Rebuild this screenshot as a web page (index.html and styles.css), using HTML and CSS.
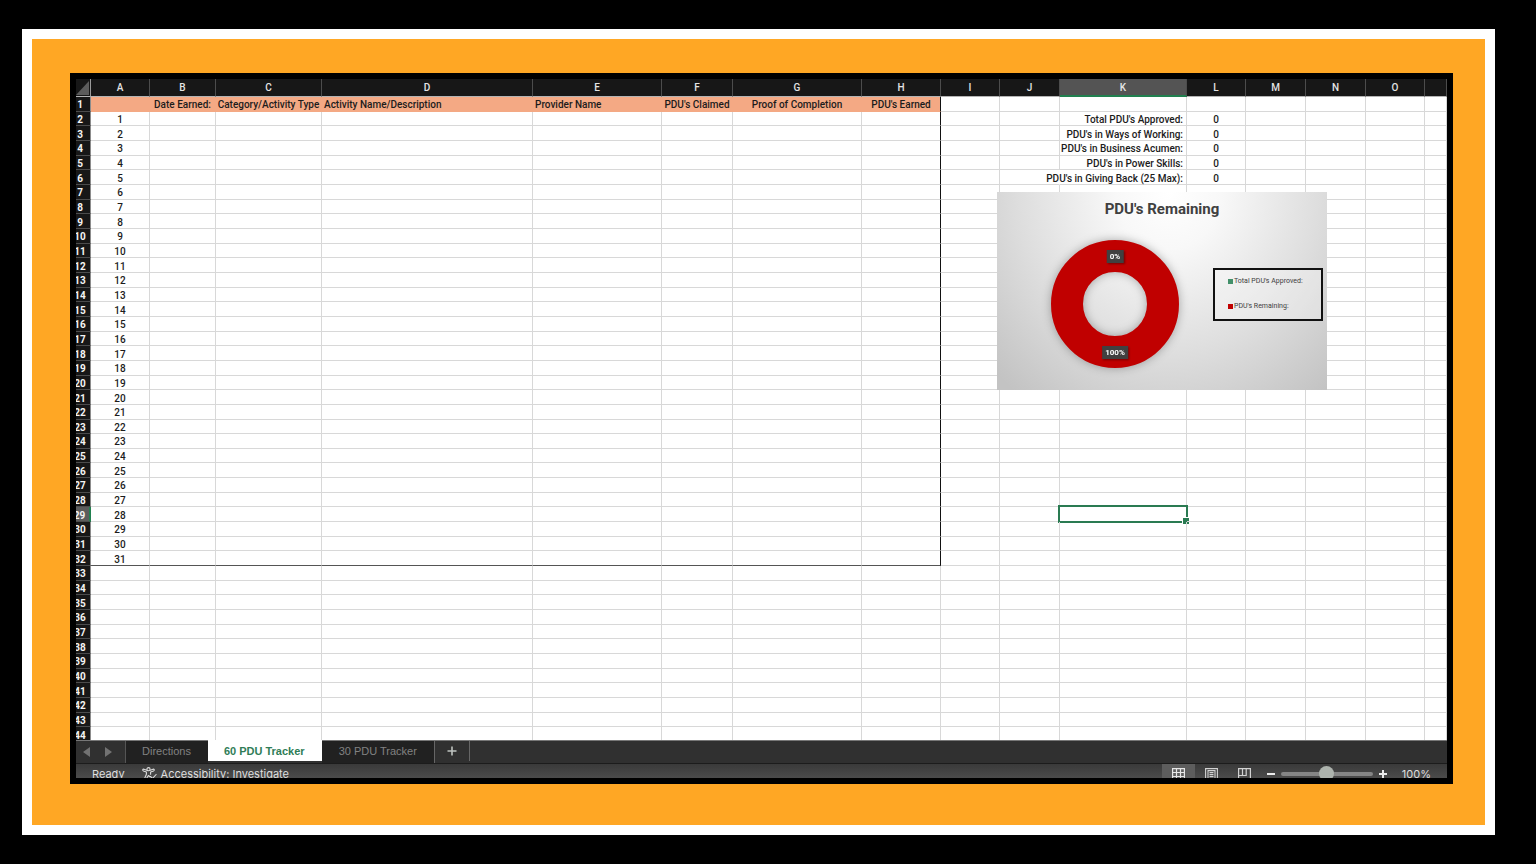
FILE: index.html
```html
<!DOCTYPE html>
<html lang="en">
<head>
<meta charset="utf-8">
<title>60 PDU Tracker</title>
<link rel="stylesheet" href="styles.css">
</head>
<body>
<div class="frame">
  <div class="mat">
    <main class="window">
      <div class="sheet-area">
        <table class="sheet">
          <thead>
            <tr id="columns"><th class="corner" aria-label="Select all"><svg viewBox="0 0 14 17" width="14" height="17" aria-hidden="true"><path d="M13 2v14H0z" fill="#5c5c5c"/></svg></th></tr>
          </thead>
          <tbody id="rows"></tbody>
        </table>
      </div>

      <nav class="tabs" aria-label="Sheets">
        <button class="arrow" type="button" aria-label="Previous sheet"><svg width="8" height="10" viewBox="0 0 8 10"><path d="M7 0v10L0 5z" fill="#727272"/></svg></button>
        <button class="arrow" type="button" aria-label="Next sheet"><svg width="8" height="10" viewBox="0 0 8 10"><path d="M1 0v10l7-5z" fill="#727272"/></svg></button>
        <button class="tab tab-first" type="button">Directions</button>
        <button class="tab tab-active" type="button">60 PDU Tracker</button>
        <button class="tab tab-last" type="button">30 PDU Tracker</button>
        <button class="add" type="button" aria-label="Add sheet"><svg width="10" height="10" viewBox="0 0 10 10"><path d="M5 0.5v9M0.5 5h9" stroke="#bdc2bf" stroke-width="1.6"/></svg></button>
      </nav>

      <footer class="status">
        <span class="ready">Ready</span>
        <button class="access" type="button">
          <svg width="15" height="14" viewBox="0 0 15 14" fill="none" stroke="#dcdcdc" stroke-width="1.1" stroke-linecap="round" stroke-linejoin="round"><circle cx="6.5" cy="2.2" r="1.6"/><path d="M4.8 3.2 2 2.2c-1.3-.3-1.7 1.2-.6 1.7L4.4 5v2.2L2.8 11c-.4 1.2 1 1.8 1.6.7L6.4 8.500 8 9.700M8.200 3.200 11 2.200c1.300-.3 1.700 1.200.6 1.700L8.600 5v2.200M8.500 9.500l2 2 3.600-4"/></svg>
          Accessibility: Investigate
        </button>
        <div class="controls">
          <button class="view view-on" type="button" aria-label="Normal view"><svg width="13" height="13" viewBox="0 0 13 13" fill="none" stroke="#e6e6e6" stroke-width="1.2"><path d="M.6.6h11.800v11.800H.6zM4.500.6v11.800M8.500.6v11.800M.6 4.500h11.800M.6 8.500h11.800"/></svg></button>
          <button class="view" type="button" aria-label="Page layout"><svg width="13" height="13" viewBox="0 0 13 13" fill="none" stroke="#d2d2d2" stroke-width="1.100"><path d="M.6.6h11.800v11.800H.6zM3 2.600h7v8H3zM4.500 4.600h4M4.500 6.600h4M4.500 8.600h4"/></svg></button>
          <button class="view" type="button" aria-label="Page break preview"><svg width="13" height="13" viewBox="0 0 13 13" fill="none" stroke="#d2d2d2" stroke-width="1.200"><path d="M.6 12.400V.6h11.800v11.800M.6 7.500h7.600V.6M4.500.6v6.900"/></svg></button>
          <button class="step step-out" type="button" aria-label="Zoom out"><svg width="8" height="8" viewBox="0 0 8 8"><path d="M0 4h8" stroke="#ececec" stroke-width="2"/></svg></button>
          <input class="zoom" type="range" min="0" max="100" value="50" aria-label="Zoom">
          <button class="step" type="button" aria-label="Zoom in"><svg width="8" height="8" viewBox="0 0 8 8"><path d="M0 4h8M4 0v8" stroke="#ececec" stroke-width="2"/></svg></button>
          <span class="percent">100%</span>
        </div>
      </footer>
    </main>
  </div>
</div>

<template id="chart">
  <figure class="chart">
    <figcaption class="chart-title">PDU's Remaining</figcaption>
    <div class="chart-body">
      <div class="donut">
        <svg width="128" height="128" viewBox="0 0 128 128" aria-hidden="true"><circle cx="64" cy="64" r="48" fill="none" stroke="#c00000" stroke-width="32"/></svg>
        <span class="value value-top">0%</span>
        <span class="value value-bottom">100%</span>
      </div>
      <ul class="legend">
        <li class="approved">Total PDU's Approved:</li>
        <li class="remaining">PDU's Remaining:</li>
      </ul>
    </div>
  </figure>
</template>
<script src="app.js"></script>
</body>
</html>
```

FILE: styles.css
```css
* {
  box-sizing: border-box;
}

body {
  margin: 0;
  height: 100vh;
  padding: 29px 41px 29px 22px;
  background: #000;
  font-family: Roboto, "Noto Sans", sans-serif;
  font-size: 10px;
  color: #1c1c1c;
}

button {
  margin: 0;
  padding: 0;
  border: 0;
  background: none;
  color: inherit;
  font: inherit;
}

svg {
  display: block;
}

.frame {
  height: 100%;
  padding: 10px;
  background: #fff;
}

.mat {
  height: 100%;
  padding: 34px 32px 41px 38px;
  background: #ffa724;
}

.window {
  display: flex;
  flex-direction: column;
  height: 100%;
  border: 6px solid #000;
  background: #fff;
  overflow: hidden;
}

/* Worksheet */

.sheet-area {
  flex: 1;
  min-height: 0;
  overflow: hidden;
}

.sheet {
  display: grid;
  grid-template-columns: 15fr 59fr 66fr 106fr 211fr 129fr 71fr 129fr 79fr 59fr 60fr 127fr 59fr 60fr 60fr 59fr 22fr;
  grid-template-rows: 18px repeat(44, minmax(0, 1fr));
  height: calc(100% + 2px);
}

.sheet thead,
.sheet tbody,
.sheet tr {
  display: contents;
}

.sheet th,
.sheet td {
  display: flex;
  align-items: center;
  justify-content: center;
  min-width: 0;
  padding: 0;
  line-height: 12px;
  white-space: nowrap;
  font-weight: 500;
}

.sheet td {
  position: relative;
  padding-top: 3px;
  border-right: 1px solid #d8d8d8;
  border-bottom: 1px solid #d8d8d8;
}

.sheet thead th {
  border-right: 1px solid #4c4c4c;
  border-bottom: 1px solid #b4b4b4;
  background: #171717;
  color: #e4e4e4;
}

.sheet thead .corner {
  border-right-color: #9a9a9a;
}

.sheet thead .picked {
  padding-top: 1px;
  border-bottom: 2px solid #21804f;
  background: #545454;
}

.sheet tbody th {
  padding: 3px 6px 0 0;
  border-right: 1px solid #8c8c8c;
  border-bottom: 1px solid #4c4c4c;
  background: #171717;
  color: #f4f4f4;
  font-weight: 700;
  overflow: hidden;
}

.sheet tbody .picked {
  border-right: 2px solid #21804f;
  background: #5c5c5c;
}

.sheet .heading {
  border-color: #f4a984;
  background: #f4a984;
}

.sheet .left {
  justify-content: flex-start;
  padding-left: 2px;
}

.sheet .right {
  justify-content: flex-end;
  padding-right: 3px;
}

.sheet .log-edge {
  border-right-color: #111;
}

.sheet .log-end {
  border-bottom-color: #555;
}

.sheet .open {
  border-right-color: transparent;
}

.selected::before {
  content: "";
  position: absolute;
  inset: -2px;
  border: 2px solid #2a7b52;
}

.selected::after {
  content: "";
  position: absolute;
  right: -3px;
  bottom: -3px;
  width: 6px;
  height: 6px;
  border-top: 1px solid #fff;
  border-left: 1px solid #fff;
  background: #2a7b52 padding-box;
}

/* Chart */

.chart {
  position: absolute;
  z-index: 1;
  top: 7px;
  left: -3px;
  width: 330px;
  height: 198px;
  margin: 0;
  background: radial-gradient(ellipse 240px 260px at 52% 0, #fff 0, #f8f8f8 22%, #dedede 62%, #c3c3c3 100%);
  color: #404040;
}

.chart-title {
  padding-top: 7px;
  font-size: 15px;
  font-weight: 700;
  line-height: 20px;
  text-align: center;
}

.chart-body {
  display: flex;
  align-items: center;
  margin-top: 21px;
  padding-left: 54px;
}

.donut {
  position: relative;
  border-radius: 50%;
  filter: drop-shadow(0 0 5px rgba(0, 0, 0, 0.3));
}

.value {
  position: absolute;
  left: 50%;
  padding: 0 3px;
  transform: translateX(-50%);
  background: #404040;
  box-shadow: 1px 1px 2px rgba(0, 0, 0, 0.4);
  color: #fff;
  font-size: 8px;
  font-weight: 700;
  line-height: 13px;
}

.value-top {
  top: 10px;
}

.value-bottom {
  bottom: 9px;
}

.legend {
  display: grid;
  gap: 15px;
  width: 110px;
  margin: 0 0 18px 34px;
  padding: 6px 0 8px 13px;
  border: 2px solid #111;
  background: rgba(255, 255, 255, 0.3);
  font-size: 7px;
  font-weight: 400;
  line-height: 10px;
  list-style: none;
}

.legend li {
  display: flex;
  align-items: center;
  gap: 1px;
}

.legend li::before {
  content: "";
  width: 5px;
  height: 5px;
  background: #c00000;
}

.legend .approved::before {
  background: #42906a;
}

/* Sheet tabs */

.tabs {
  display: flex;
  height: 24px;
  border-top: 1px solid #777;
  border-bottom: 1px solid #1c1c1c;
  background: #303030;
  color: #828282;
  font-family: "Liberation Sans", Arial, sans-serif;
  font-size: 11px;
}

.arrow {
  display: grid;
  place-items: center;
  width: 21px;
}

.arrow + .tab {
  margin-left: 7px;
}

.tab {
  padding: 0 17px 2px;
  background: #212121;
}

.tab-first {
  padding-left: 16px;
  border-left: 1px solid #555;
}

.tab-active {
  height: 21px;
  margin-top: -1px;
  padding: 0 17px 0 16px;
  background: #fff;
  color: #2f7d57;
  font-weight: 700;
}

.tab-last,
.add {
  border-right: 1px solid #666;
}

.add {
  display: grid;
  place-items: center;
  width: 35px;
  height: 20px;
}

/* Status bar */

.status {
  display: flex;
  align-items: flex-start;
  height: 14px;
  padding: 0 16px;
  background: linear-gradient(#3a3a3a, #4b4b4b);
  color: #dedede;
  font-family: Inter, "Liberation Sans", sans-serif;
  font-size: 11px;
  line-height: 20px;
  overflow: hidden;
}

.access {
  display: flex;
  align-items: center;
  gap: 4px;
  height: 20px;
  margin-left: 17px;
}

.controls {
  display: flex;
  align-items: center;
  height: 20px;
  margin-left: auto;
}

.view {
  display: grid;
  place-items: center;
  width: 33px;
  height: 20px;
}

.view-on {
  background: #5d5d5d;
}

.step-out {
  margin-left: 6px;
}

.zoom {
  width: 92px;
  height: 15px;
  margin: 0 6px;
  appearance: none;
  background: none;
}

.zoom::-webkit-slider-runnable-track {
  height: 4px;
  border-radius: 2px;
  background: #858585;
}

.zoom::-webkit-slider-thumb {
  appearance: none;
  width: 15px;
  height: 15px;
  margin-top: -6px;
  border-radius: 50%;
  background: #adb3ad;
}

.percent {
  margin-left: 15px;
}
```

FILE: app.js
```js
const letters = ["A", "B", "C", "D", "E", "F", "G", "H", "I", "J", "K", "L", "M", "N", "O", ""];
const logColumns = "ABCDEFGH";
const lastLogRow = 32;

const headings = {
  B: "Date Earned:",
  C: "Category/Activity Type",
  D: "Activity Name/Description",
  E: "Provider Name",
  F: "PDU's Claimed",
  G: "Proof of Completion",
  H: "PDU's Earned"
};

const totals = {
  2: "Total PDU's Approved:",
  3: "PDU's in Ways of Working:",
  4: "PDU's in Business Acumen:",
  5: "PDU's in Power Skills:",
  6: "PDU's in Giving Back (25 Max):"
};

const columns = document.getElementById("columns");
for (const letter of letters) {
  const th = document.createElement("th");
  th.scope = "col";
  th.textContent = letter;
  if (letter === "K") th.className = "picked";
  columns.append(th);
}

const rows = document.getElementById("rows");
for (let n = 1; n <= 44; n++) {
  const tr = document.createElement("tr");
  const th = document.createElement("th");
  th.scope = "row";
  th.textContent = n;
  if (n === 29) th.className = "picked";
  tr.append(th);

  for (const letter of letters) {
    const td = document.createElement("td");
    const inLog = letter && logColumns.includes(letter) && n <= lastLogRow;
    if (inLog && n === 1) {
      td.classList.add("heading");
      td.textContent = headings[letter] || "";
      if (letter === "D" || letter === "E") td.classList.add("left");
    }
    if (inLog && n > 1 && letter === "A") td.textContent = n - 1;
    if (inLog && letter === "H") td.classList.add("log-edge");
    if (inLog && n === lastLogRow) td.classList.add("log-end");
    if (totals[n] && letter === "K") {
      td.classList.add("right");
      td.textContent = totals[n];
    }
    if (totals[n] && letter === "L") td.textContent = "0";
    if (n === 6 && letter === "J") td.classList.add("open");
    if (n === 7 && letter === "J") td.append(document.getElementById("chart").content.cloneNode(true));
    if (n === 29 && letter === "K") td.classList.add("selected");
    tr.append(td);
  }
  rows.append(tr);
}
```
